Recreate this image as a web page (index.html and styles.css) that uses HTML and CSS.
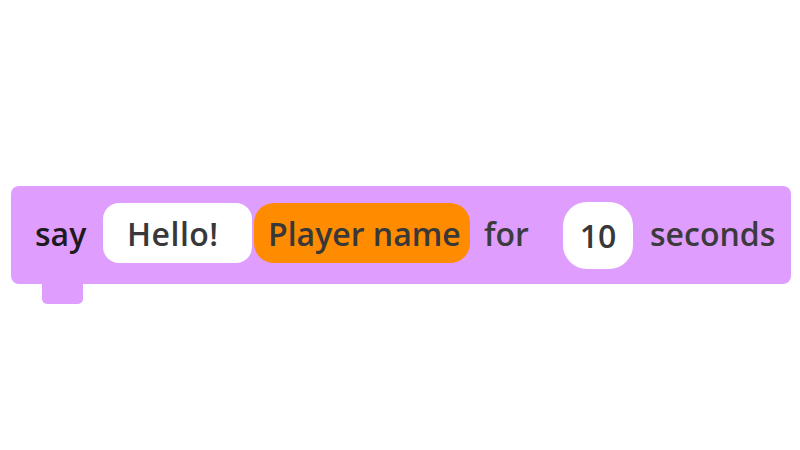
FILE: index.html
```html
<!DOCTYPE html>
<html>
<head>
<meta charset="utf-8">
<link rel="stylesheet" href="styles.css">
</head>
<body>
<main class="stage">
  <div class="block">
    <div class="block-row">
      <span class="label label-say">say</span>
      <span class="input input-text">Hello!</span>
      <span class="input input-reporter">Player name</span>
      <span class="label label-for">for</span>
      <span class="input input-number">10</span>
      <span class="label label-seconds">seconds</span>
    </div>
    <div class="block-tab"></div>
  </div>
</main>
</body>
</html>
```
FILE: styles.css
```css
html, body {
  margin: 0;
  padding: 0;
  background: #ffffff;
}
.stage {
  width: 800px;
  height: 450px;
  padding-top: 186px;
  padding-left: 11px;
  box-sizing: border-box;
  font-family: "Open Sans", "Noto Sans", sans-serif;
}
.block {
  width: 780px;
}
.block-row {
  display: flex;
  align-items: center;
  height: 98px;
  background: #df9efd;
  border-radius: 8px;
  padding-left: 24px;
  padding-bottom: 4px;
  box-sizing: border-box;
}
.block-tab {
  width: 41px;
  height: 20px;
  margin-left: 31px;
  background: #df9efd;
  border-radius: 0 0 5px 5px;
}
.label {
  font-size: 32px;
  font-weight: 600;
  color: #3b3b3d;
  line-height: 1;
  flex: none;
  margin-top: 2px;
}
.label-say {
  color: #1e1a21;
  width: 51px;
}
.label-for {
  margin-left: 14px;
  width: 46px;
}
.label-seconds {
  margin-left: 17px;
}
.input {
  display: flex;
  align-items: center;
  box-sizing: border-box;
  font-size: 32px;
  font-weight: 600;
  color: #38383a;
  line-height: 1;
  flex: none;
  white-space: nowrap;
  padding-top: 2px;
}
.input-text {
  margin-left: 17px;
  width: 149px;
  height: 60px;
  background: #ffffff;
  border-radius: 16px;
  padding-left: 24px;
  letter-spacing: 0.5px;
}
.input-reporter {
  margin-left: 2px;
  width: 216px;
  height: 60px;
  background: #ff8b00;
  border-radius: 20px;
  padding-left: 14px;
}
.input-number {
  margin-left: 33px;
  width: 70px;
  height: 67px;
  margin-top: 5px;
  padding-top: 0;
  background: #ffffff;
  border-radius: 24px;
  justify-content: center;
}
```
